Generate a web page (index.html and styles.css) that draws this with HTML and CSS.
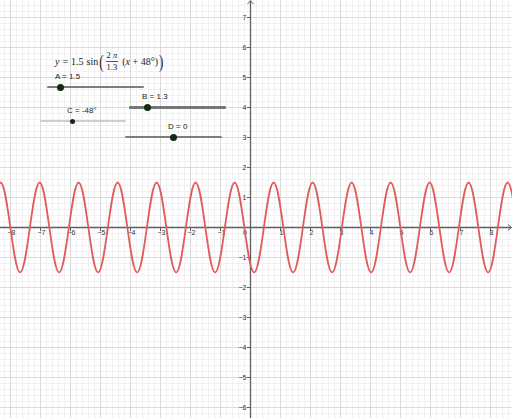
FILE: index.html
```html
<!DOCTYPE html>
<html>
<head>
<meta charset="utf-8">
<link rel="stylesheet" href="styles.css">
</head>
<body>
<div class="canvas">
  <svg class="plot" width="512" height="418" viewBox="0 0 512 418" xmlns="http://www.w3.org/2000/svg">
    <defs>
      <pattern id="minor" x="4" y="5" width="6" height="6" patternUnits="userSpaceOnUse">
        <rect class="g-minor" width="6" height="1"/>
        <rect class="g-minor" width="1" height="6"/>
      </pattern>
      <pattern id="major" x="10" y="17" width="30" height="30" patternUnits="userSpaceOnUse">
        <rect class="g-major" width="30" height="1"/>
        <rect class="g-major" width="1" height="30"/>
      </pattern>
    </defs>
    <rect width="512" height="418" fill="#ffffff"/>
    <rect width="512" height="418" fill="url(#minor)"/>
    <rect width="512" height="418" fill="url(#major)"/>

    <g class="axis">
      <line x1="250.5" y1="0.5" x2="250.5" y2="418"/>
      <line x1="0" y1="227.5" x2="511.5" y2="227.5"/>
      <polyline class="arrow" points="247.5,4 250.5,0.8 253.5,4"/>
      <polyline class="arrow" points="508,224.5 511.3,227.5 508,230.5"/>
    </g>
    <g class="ticks">
      <path d="M247 17.5h3M247 47.5h3M247 77.5h3M247 107.5h3M247 137.5h3M247 167.5h3M247 197.5h3M247 257.5h3M247 287.5h3M247 317.5h3M247 347.5h3M247 377.5h3M247 407.5h3"/>
      <path d="M10.5 228v3M40.5 228v3M70.5 228v3M100.5 228v3M130.5 228v3M160.5 228v3M190.5 228v3M220.5 228v3M280.5 228v3M310.5 228v3M340.5 228v3M370.5 228v3M400.5 228v3M430.5 228v3M460.5 228v3M490.5 228v3"/>
    </g>

    <g class="xlab">
      <text x="11.5" y="235">−8</text>
      <text x="41.5" y="235">−7</text>
      <text x="71.5" y="235">−6</text>
      <text x="101.5" y="235">−5</text>
      <text x="131.5" y="235">−4</text>
      <text x="161.5" y="235">−3</text>
      <text x="191.5" y="235">−2</text>
      <text x="221.5" y="235">−1</text>
      <text x="281.5" y="235">1</text>
      <text x="311.5" y="235">2</text>
      <text x="341.5" y="235">3</text>
      <text x="371.5" y="235">4</text>
      <text x="401.5" y="235">5</text>
      <text x="431.5" y="235">6</text>
      <text x="461.5" y="235">7</text>
      <text x="491.5" y="235">8</text>
    </g>
    <g class="ylab">
      <text x="246.5" y="19.5">7</text>
      <text x="246.5" y="49.5">6</text>
      <text x="246.5" y="79.5">5</text>
      <text x="246.5" y="109.5">4</text>
      <text x="246.5" y="139.5">3</text>
      <text x="246.5" y="169.5">2</text>
      <text x="246.5" y="199.5">1</text>
      <text x="247" y="235">0</text>
      <text x="246.5" y="259.5">−1</text>
      <text x="246.5" y="289.5">−2</text>
      <text x="246.5" y="319.5">−3</text>
      <text x="246.5" y="349.5">−4</text>
      <text x="246.5" y="379.5">−5</text>
      <text x="246.5" y="409.5">−6</text>
    </g>

    <path class="curve" d="M-9.13 227.5c3.18-23.05 6.22-45 9.75-45s6.57 21.95 9.75 45s6.22 45 9.75 45s6.57-21.95 9.75-45
      s6.22-45 9.75-45s6.57 21.95 9.75 45s6.22 45 9.75 45s6.57-21.95 9.75-45
      s6.22-45 9.75-45s6.57 21.95 9.75 45s6.22 45 9.75 45s6.57-21.95 9.75-45
      s6.22-45 9.75-45s6.57 21.95 9.75 45s6.22 45 9.75 45s6.57-21.95 9.75-45
      s6.22-45 9.75-45s6.57 21.95 9.75 45s6.22 45 9.75 45s6.57-21.95 9.75-45
      s6.22-45 9.75-45s6.57 21.95 9.75 45s6.22 45 9.75 45s6.57-21.95 9.75-45
      s6.22-45 9.75-45s6.57 21.95 9.75 45s6.22 45 9.75 45s6.57-21.95 9.75-45
      s6.22-45 9.75-45s6.57 21.95 9.75 45s6.22 45 9.75 45s6.57-21.95 9.75-45
      s6.22-45 9.75-45s6.57 21.95 9.75 45s6.22 45 9.75 45s6.57-21.95 9.75-45
      s6.22-45 9.75-45s6.57 21.95 9.75 45s6.22 45 9.75 45s6.57-21.95 9.75-45
      s6.22-45 9.75-45s6.57 21.95 9.75 45s6.22 45 9.75 45s6.57-21.95 9.75-45
      s6.22-45 9.75-45s6.57 21.95 9.75 45s6.22 45 9.75 45s6.57-21.95 9.75-45
      s6.22-45 9.75-45s6.57 21.95 9.75 45s6.22 45 9.75 45s6.57-21.95 9.75-45
      s6.22-45 9.75-45s6.57 21.95 9.75 45s6.22 45 9.75 45s6.57-21.95 9.75-45"/>
  </svg>

  <div class="formula">
    <span class="it">y</span><span class="rel">=</span><span>1.5</span><span class="fn">sin</span><span class="bigp">(</span><span class="frac"><span class="num">2 <span class="it">π</span></span><span class="den">1.3</span></span><span class="inner">(<span class="it">x</span> + 48°)</span><span class="bigp">)</span>
  </div>

  <span class="slabel l-a">A = 1.5</span>
  <div class="track t-a"><span class="knob"></span></div>

  <span class="slabel l-b">B = 1.3</span>
  <div class="track t-b"><span class="knob"></span></div>

  <span class="slabel l-c">C = -48°</span>
  <div class="track t-c"><span class="knob"></span></div>

  <span class="slabel l-d">D = 0</span>
  <div class="track t-d"><span class="knob"></span></div>
</div>
</body>
</html>
```

FILE: styles.css
```css
html, body {
  margin: 0;
  padding: 0;
  background: #ffffff;
  overflow: hidden;
}

.canvas {
  position: relative;
  width: 512px;
  height: 418px;
  overflow: hidden;
  font-family: "Liberation Sans", Arial, sans-serif;
}

.plot {
  display: block;
}

.g-minor { fill: #f1f1f1; }
.g-major { fill: #dadada; }

.axis line,
.axis polyline {
  stroke: #5e5e5e;
  stroke-width: 1.3;
  fill: none;
}
.axis .arrow { stroke-width: 1; }

.ticks path {
  stroke: #5e5e5e;
  stroke-width: 1;
  fill: none;
}

.xlab text,
.ylab text {
  font-family: "Liberation Sans", Arial, sans-serif;
  font-size: 7px;
  fill: #333333;
}
.xlab text { text-anchor: middle; }
.ylab text { text-anchor: end; }

.curve {
  fill: none;
  stroke: #e05c5c;
  stroke-width: 1.8;
  stroke-linejoin: round;
}

/* formula */
.formula {
  position: absolute;
  left: 55px;
  top: 50px;
  height: 22px;
  display: flex;
  align-items: center;
  font-family: "Liberation Serif", "Times New Roman", serif;
  font-size: 10px;
  color: #222222;
  white-space: nowrap;
}
.formula .it { font-style: italic; }
.formula .rel { margin: 0 3px; }
.formula .fn { margin-left: 3px; }
.formula .bigp {
  display: inline-block;
  font-size: 13px;
  line-height: 1;
  transform: scale(1, 1.5);
  margin: 0 1px;
}
.formula .frac {
  display: inline-flex;
  flex-direction: column;
  align-items: center;
  font-size: 8.5px;
  line-height: 1;
  margin: 0 1px;
}
.formula .num {
  padding: 0 1px 1px;
}
.formula .den {
  padding: 1px 1px 0;
  border-top: 0.7px solid #555555;
}
.formula .inner { margin-left: 3px; }

/* sliders */
.slabel {
  position: absolute;
  font-size: 8px;
  line-height: 8px;
  color: #222222;
  white-space: nowrap;
}
.l-a { left: 55px; top: 73px; }
.l-b { left: 142px; top: 93px; }
.l-c { left: 67px; top: 107px; }
.l-d { left: 168px; top: 123px; }

.track {
  position: absolute;
  height: 2px;
  background: #7d7d7d;
  border-radius: 1px;
}
.t-a { left: 47px; top: 86px; width: 97px; }
.t-b { left: 129px; top: 106px; width: 97px; height: 3px; background: #777777; }
.t-c { left: 40px; top: 120px; width: 86px; background: #cbcfcb; }
.t-d { left: 125px; top: 136px; width: 97px; }

.knob {
  position: absolute;
  top: 50%;
  width: 7px;
  height: 7px;
  margin: -3.5px 0 0 -3.5px;
  border-radius: 50%;
  background: #142814;
}
.t-a .knob { left: 13.5px; }
.t-b .knob { left: 18px; }
.t-c .knob { left: 32px; width: 5px; height: 5px; margin: -2.5px 0 0 -2.5px; }
.t-d .knob { left: 48.5px; }
```
